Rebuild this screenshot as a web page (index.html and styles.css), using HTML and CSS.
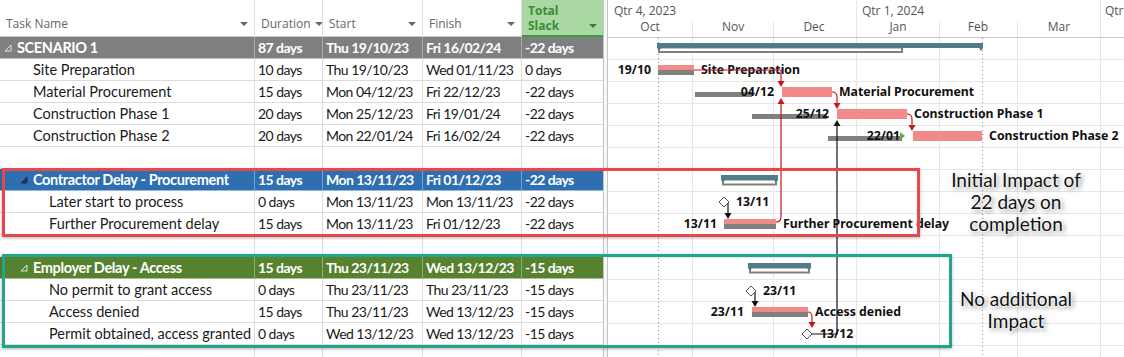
FILE: index.html
```html
<!DOCTYPE html>
<html lang="en">
<head>
  <meta charset="UTF-8" />
  <title>Delay Analysis - Gantt</title>
  <link rel="stylesheet" href="styles.css">
</head>
<body>
  <div class="view">
    <div class="sheet">
      <div class="row head">
        <div class="cell">Task Name<span class="drop"></span></div>
        <div class="cell">Duration<span class="drop"></span></div>
        <div class="cell">Start<span class="drop"></span></div>
        <div class="cell">Finish<span class="drop"></span></div>
        <div class="cell slack"><span>Total<br>Slack</span><span class="drop"></span></div>
      </div>

      <div class="row sum grey">
        <div class="cell name l0"><svg class="tog" width="8" height="8"><polygon points="7,1 7,7 1,7"/></svg>SCENARIO 1</div>
        <div class="cell">87 days</div>
        <div class="cell">Thu 19/10/23</div>
        <div class="cell">Fri 16/02/24</div>
        <div class="cell">-22 days</div>
      </div>
      <div class="row">
        <div class="cell name l1">Site Preparation</div>
        <div class="cell">10 days</div>
        <div class="cell">Thu 19/10/23</div>
        <div class="cell">Wed 01/11/23</div>
        <div class="cell">0 days</div>
      </div>
      <div class="row">
        <div class="cell name l1">Material Procurement</div>
        <div class="cell">15 days</div>
        <div class="cell">Mon 04/12/23</div>
        <div class="cell">Fri 22/12/23</div>
        <div class="cell">-22 days</div>
      </div>
      <div class="row">
        <div class="cell name l1">Construction Phase 1</div>
        <div class="cell">20 days</div>
        <div class="cell">Mon 25/12/23</div>
        <div class="cell">Fri 19/01/24</div>
        <div class="cell">-22 days</div>
      </div>
      <div class="row">
        <div class="cell name l1">Construction Phase 2</div>
        <div class="cell">20 days</div>
        <div class="cell">Mon 22/01/24</div>
        <div class="cell">Fri 16/02/24</div>
        <div class="cell">-22 days</div>
      </div>
      <div class="row">
        <div class="cell"></div><div class="cell"></div><div class="cell"></div><div class="cell"></div><div class="cell"></div>
      </div>

      <div class="row sum blue">
        <div class="cell name l1s"><svg class="tog" width="8" height="8"><polygon points="7,1 7,7 1,7"/></svg>Contractor Delay - Procurement</div>
        <div class="cell">15 days</div>
        <div class="cell">Mon 13/11/23</div>
        <div class="cell">Fri 01/12/23</div>
        <div class="cell">-22 days</div>
      </div>
      <div class="row">
        <div class="cell name l2">Later start to process</div>
        <div class="cell">0 days</div>
        <div class="cell">Mon 13/11/23</div>
        <div class="cell">Mon 13/11/23</div>
        <div class="cell">-22 days</div>
      </div>
      <div class="row">
        <div class="cell name l2">Further Procurement delay</div>
        <div class="cell">15 days</div>
        <div class="cell">Mon 13/11/23</div>
        <div class="cell">Fri 01/12/23</div>
        <div class="cell">-22 days</div>
      </div>
      <div class="row">
        <div class="cell"></div><div class="cell"></div><div class="cell"></div><div class="cell"></div><div class="cell"></div>
      </div>

      <div class="row sum green">
        <div class="cell name l1s"><svg class="tog" width="8" height="8"><polygon points="7,1 7,7 1,7"/></svg>Employer Delay - Access</div>
        <div class="cell">15 days</div>
        <div class="cell">Thu 23/11/23</div>
        <div class="cell">Wed 13/12/23</div>
        <div class="cell">-15 days</div>
      </div>
      <div class="row">
        <div class="cell name l2">No permit to grant access</div>
        <div class="cell">0 days</div>
        <div class="cell">Thu 23/11/23</div>
        <div class="cell">Thu 23/11/23</div>
        <div class="cell">-15 days</div>
      </div>
      <div class="row">
        <div class="cell name l2">Access denied</div>
        <div class="cell">15 days</div>
        <div class="cell">Thu 23/11/23</div>
        <div class="cell">Wed 13/12/23</div>
        <div class="cell">-15 days</div>
      </div>
      <div class="row">
        <div class="cell name l2">Permit obtained, access granted</div>
        <div class="cell">0 days</div>
        <div class="cell">Wed 13/12/23</div>
        <div class="cell">Wed 13/12/23</div>
        <div class="cell">-15 days</div>
      </div>
      <div class="row">
        <div class="cell"></div><div class="cell"></div><div class="cell"></div><div class="cell"></div><div class="cell"></div>
      </div>
    </div>

    <div class="split"></div>

    <div class="gantt">
      <svg class="chart" width="516" height="357" viewBox="0 0 516 357">
        <!-- timescale -->
        <text class="tl" x="6" y="15">Qtr 4, 2023</text>
        <text class="tl" x="254" y="15">Qtr 1, 2024</text>
        <text class="tl" x="497" y="15">Qtr</text>
        <text class="tl mid" x="42" y="31">Oct</text>
        <text class="tl mid" x="125" y="31">Nov</text>
        <text class="tl mid" x="206" y="31">Dec</text>
        <text class="tl mid" x="290" y="31">Jan</text>
        <text class="tl mid" x="370" y="31">Feb</text>
        <text class="tl mid" x="451" y="31">Mar</text>

        <g class="grid">
          <line x1="84.5" y1="22" x2="84.5" y2="357"/>
          <line x1="165.5" y1="22" x2="165.5" y2="357"/>
          <line x1="331.5" y1="22" x2="331.5" y2="357"/>
          <line x1="409.5" y1="22" x2="409.5" y2="357"/>
          <line x1="248.5" y1="0" x2="248.5" y2="357"/>
          <line x1="492.5" y1="0" x2="492.5" y2="357"/>
          <line x1="0" y1="59.5" x2="516" y2="59.5"/>
          <line x1="0" y1="81.5" x2="516" y2="81.5"/>
          <line x1="0" y1="103.5" x2="516" y2="103.5"/>
          <line x1="0" y1="125.5" x2="516" y2="125.5"/>
          <line x1="0" y1="147.5" x2="516" y2="147.5"/>
          <line x1="0" y1="169.5" x2="516" y2="169.5"/>
          <line x1="0" y1="191.5" x2="516" y2="191.5"/>
          <line x1="0" y1="213.5" x2="516" y2="213.5"/>
          <line x1="0" y1="235.5" x2="516" y2="235.5"/>
          <line x1="0" y1="257.5" x2="516" y2="257.5"/>
          <line x1="0" y1="279.5" x2="516" y2="279.5"/>
          <line x1="0" y1="301.5" x2="516" y2="301.5"/>
          <line x1="0" y1="323.5" x2="516" y2="323.5"/>
          <line x1="0" y1="345.5" x2="516" y2="345.5"/>
        </g>
        <line class="rule" x1="0" y1="37.5" x2="516" y2="37.5"/>
        <line class="dots" x1="50.5" y1="38" x2="50.5" y2="357"/>
        <line class="dots" x1="374.5" y1="38" x2="374.5" y2="357"/>

        <!-- summary bars -->
        <rect class="base-sum" x="51" y="47.5" width="243" height="4.5"/>
        <path class="sum-bar" d="M49,43 H375 V48 L373,51 L371,48 H53 L51,51 L49,48 Z"/>
        <rect class="base-sum" x="115" y="179.5" width="53" height="5"/>
        <path class="sum-bar" d="M113,175 H170 V180 L168,183 L166,180 H117 L115,183 L113,180 Z"/>
        <rect class="base-sum" x="142" y="267.5" width="59" height="5"/>
        <path class="sum-bar" d="M140,263 H203 V268 L201,271 L199,268 H144 L142,271 L140,268 Z"/>

        <!-- task bars -->
        <rect class="bar" x="50" y="65" width="36" height="10"/>
        <rect class="base" x="50" y="70" width="36" height="5"/>
        <rect class="bar" x="174" y="87" width="50" height="10"/>
        <rect class="base" x="87" y="92" width="57" height="5"/>
        <rect class="bar" x="229" y="109" width="70" height="10"/>
        <rect class="base" x="144" y="114" width="75" height="5"/>
        <rect class="bar" x="305" y="131" width="69" height="10"/>
        <rect class="base" x="220" y="136" width="74" height="5"/>
        <polygon class="mark" points="292,132 297,136 292,140"/>
        <rect class="bar" x="116" y="219" width="52" height="10"/>
        <rect class="base" x="116" y="224" width="52" height="5"/>
        <rect class="bar" x="144" y="307" width="56" height="10"/>
        <rect class="base" x="144" y="312" width="56" height="5"/>

        <!-- labels -->
        <text class="lbl end" x="43" y="74">19/10</text>
        <text class="lbl end" x="166" y="96">04/12</text>
        <text class="lbl end" x="221" y="118">25/12</text>
        <text class="lbl end" x="292" y="140">22/01</text>
        <text class="lbl" x="231" y="96">Material Procurement</text>
        <text class="lbl" x="306" y="118">Construction Phase 1</text>
        <text class="lbl" x="381" y="140">Construction Phase 2</text>
        <text class="lbl" x="128" y="206">13/11</text>
        <text class="lbl end" x="109" y="228">13/11</text>
        <text class="lbl" x="155" y="295">23/11</text>
        <text class="lbl end" x="136" y="316">23/11</text>
        <text class="lbl" x="207" y="316">Access denied</text>

        <!-- links -->
        <text class="lbl" x="93" y="74">Site Preparation</text>
        <path class="link red" d="M86,70 H173 V82"/>
        <polygon class="head red" points="169.5,81 176.5,81 173,87"/>
        <path class="link red" d="M168,222 Q173,222 173,217 V104"/>
        <polygon class="head red" points="169.5,104 176.5,104 173,98"/>
        <path class="link red" d="M224,92 Q229,92 229,97 V103"/>
        <polygon class="head red" points="225.5,103 232.5,103 229,109"/>
        <path class="link red" d="M299,114 Q304,114 304,119 V125"/>
        <polygon class="head red" points="300.5,125 307.5,125 304,131"/>
        <path class="link red" d="M200,312 Q204,312 204,317 V322"/>
        <polygon class="head red" points="200.5,322 207.5,322 204,328"/>

        <text class="lbl" x="175" y="228">Further Procurement delay</text>
        <path class="link black" d="M120,203 V213"/>
        <polygon class="head black" points="116.5,213 123.5,213 120,219"/>
        <path class="link black" d="M147,292 V301"/>
        <polygon class="head black" points="143.5,301 150.5,301 147,307"/>
        <text class="lbl" x="212" y="338">13/12</text>
        <path class="link black" d="M203,334 H229 V126"/>
        <polygon class="head black" points="225.5,126 232.5,126 229,120"/>

        <!-- milestones -->
        <polygon class="ms" points="111,202 116,197 121,202 116,207"/>
        <polygon class="ms" points="138,291 143,286 148,291 143,296"/>
        <polygon class="ms" points="194,334 199,329 204,334 199,339"/>
      </svg>

      <div class="note note-impact">Initial Impact of<br>22 days on<br>completion</div>
      <div class="note note-none">No additional<br>Impact</div>
    </div>

    <div class="frame frame-red"></div>
    <div class="frame frame-teal"></div>
  </div>
</body>
</html>
```

FILE: styles.css
```css
body {
  margin: 0;
  width: 1124px;
  height: 357px;
  overflow: hidden;
  background: #fff;
  font-family: Lato, "Liberation Sans", sans-serif;
}

.view {
  position: relative;
  display: flex;
  height: 357px;
}

.sheet {
  width: 603px;
  flex: none;
}

.row {
  display: grid;
  grid-template-columns: 255px 68px 100px 99px 81px;
  height: 22px;
}

.cell {
  box-sizing: border-box;
  border-right: 1px solid #dcdcdc;
  border-bottom: 1px solid #dcdcdc;
  padding: 0 3px;
  font-size: 14px;
  letter-spacing: -0.55px;
  line-height: 21px;
  color: #1a1a1a;
  white-space: nowrap;
  overflow: hidden;
}

.cell.name {
  font-size: 14.5px;
  letter-spacing: 0;
}

.cell:last-child {
  border-right: none;
}

/* header */
.head {
  height: 37px;
}

.head .cell {
  display: flex;
  align-items: flex-end;
  justify-content: space-between;
  padding: 0 6px 5px 6px;
  font-family: "Open Sans", sans-serif;
  font-size: 12px;
  letter-spacing: 0;
  line-height: 15px;
  color: #666;
  border-bottom: 1px solid #c8c8c8;
}

.head .slack {
  background: #a9d8a2;
  color: #3c8c35;
  font-weight: bold;
  border-bottom: 2px solid #3f9b3c;
  padding-bottom: 2px;
}

.drop {
  width: 0;
  height: 0;
  border-left: 4px solid transparent;
  border-right: 4px solid transparent;
  border-top: 4px solid #666;
  margin: 0 0 5px 4px;
}

.slack .drop {
  border-top-color: #3c7a35;
}

/* summary rows */
.sum .cell {
  color: #fff;
  font-weight: bold;
  border-right-color: rgba(255, 255, 255, 0.35);
  border-bottom-color: rgba(255, 255, 255, 0.5);
}

.sum .cell.name {
  letter-spacing: -0.35px;
}

.grey {
  background: #7f7f7f;
}

.blue {
  background: #2e6fb1;
}

.green {
  background: #56812f;
}

.tog {
  display: inline-block;
  vertical-align: 1px;
  margin-right: 5px;
  fill: none;
  stroke: #e2e2e2;
  stroke-width: 1;
}

.blue .tog {
  stroke: #1d3550;
  fill: #1d3550;
}

.l0 { padding-left: 4px; }
.l1 { padding-left: 33px; }
.l1s { padding-left: 20px; }
.l2 { padding-left: 49px; }

.split {
  box-sizing: border-box;
  width: 5px;
  flex: none;
  border-left: 1px solid #c4c4c4;
  border-right: 1px solid #c4c4c4;
  background: #f7f7f7;
}

/* gantt */
.gantt {
  position: relative;
  width: 516px;
  flex: none;
}

.chart {
  display: block;
}

.tl {
  font-family: "Open Sans", sans-serif;
  font-size: 12px;
  fill: #555;
}

.mid {
  text-anchor: middle;
}

.grid line {
  stroke: #e6e6e6;
  stroke-width: 1;
}

.rule {
  stroke: #c8c8c8;
}

.dots {
  stroke: #8a8a8a;
  stroke-dasharray: 1 3;
}

.sum-bar {
  fill: #517e86;
}

.base-sum {
  fill: #fff;
  stroke: #808080;
  stroke-width: 2;
}

.bar {
  fill: #f28a8a;
}

.base {
  fill: #808080;
}

.mark {
  fill: #6aa84f;
}

.lbl {
  font-family: "Noto Sans", sans-serif;
  font-size: 12.3px;
  font-weight: bold;
  fill: #111;
}

.end {
  text-anchor: end;
}

.link {
  fill: none;
  stroke-width: 1.2;
}

.link.red {
  stroke: #c8161d;
}

.link.black {
  stroke: #111;
}

.head.red {
  fill: #c8161d;
}

.head.black {
  fill: #111;
}

.ms {
  fill: #fff;
  stroke: #555;
  stroke-width: 1;
}

.note {
  position: absolute;
  width: 170px;
  text-align: center;
  font-family: Lato, sans-serif;
  font-size: 19px;
  line-height: 22px;
  color: #111;
  text-shadow: 0 0 1px #fff, 0 0 2px #fff, 0 0 3px #fff, 0 0 4px #fff, 2px 2px 5px rgba(0, 0, 0, 0.6);
}

.note-impact {
  left: 323px;
  top: 169px;
}

.note-none {
  left: 323px;
  top: 288px;
}

/* highlight frames */
.frame {
  position: absolute;
  box-sizing: border-box;
  border: 3px solid;
  box-shadow: 0 1px 3px rgba(0, 0, 0, 0.3);
}

.frame-red {
  left: 2px;
  top: 168px;
  width: 918px;
  height: 69px;
  border-color: #e5474d;
}

.frame-teal {
  left: 2px;
  top: 254px;
  width: 950px;
  height: 94px;
  border-color: #22a58b;
}
```
